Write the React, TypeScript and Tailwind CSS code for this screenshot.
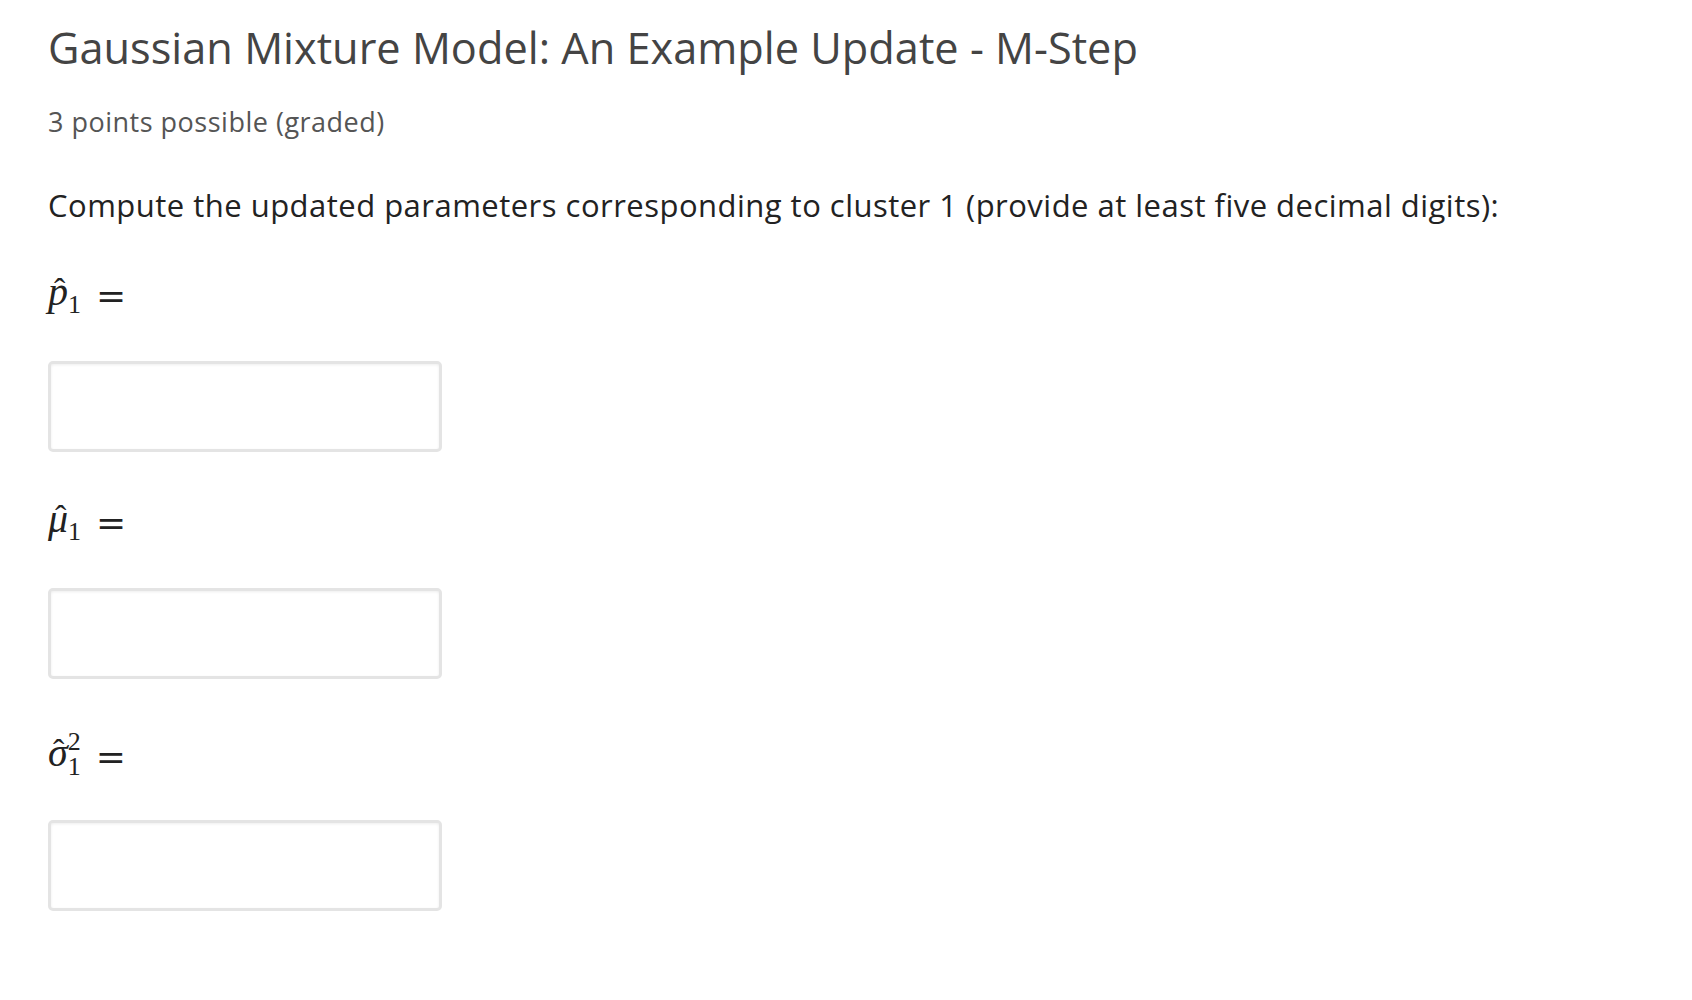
import React from 'react';

const mathFont = { fontFamily: '"Liberation Serif", "Times New Roman", serif' };

function Hat({ children, left = 'left-[6px]' }: { children: React.ReactNode; left?: string }) {
  return (
    <span className="relative inline-block italic text-[40px] leading-[40px]">
      {children}
      <span className={`absolute ${left} top-[2px] not-italic text-[34px] leading-none`}>ˆ</span>
    </span>
  );
}

function Equals() {
  return (
    <span
      className="ml-[15px] text-[36px] leading-[40px] not-italic translate-y-[3px]"
      style={{ fontFamily: '"DejaVu Serif", serif' }}
    >
      =
    </span>
  );
}

function AnswerBox() {
  return (
    <input
      type="text"
      className="block w-[394px] h-[91px] border-[3px] border-[#e4e4e4] rounded-[5px] bg-white px-3 text-[24px] outline-none shadow-[inset_0_1px_3px_rgba(0,0,0,0.07)]"
    />
  );
}

export default function App() {
  return (
    <div className="min-h-screen bg-white px-[48px] pt-[22px]" style={{ fontFamily: '"Open Sans", sans-serif' }}>
      <h1 className="text-[43.3px] leading-[52px] text-[#444444] font-normal">
        Gaussian Mixture Model: An Example Update - M-Step
      </h1>
      <p className="mt-[30px] text-[27px] leading-[36px] tracking-[0.5px] text-[#555555]">3 points possible (graded)</p>
      <p className="mt-[45px] text-[31px] leading-[40px] tracking-[0.48px] text-[#222222]">
        Compute the updated parameters corresponding to cluster 1 (provide at least five decimal digits):
      </p>

      {/* p hat */}
      <div className="mt-[47px] flex items-baseline h-[50px] text-[#222]" style={mathFont}>
        <Hat>p</Hat>
        <span className="text-[26px] leading-none translate-y-[8px]">1</span>
        <Equals />
      </div>
      <div className="mt-[39px]">
        <AnswerBox />
      </div>

      {/* mu hat */}
      <div className="mt-[47px] flex items-baseline h-[50px] text-[#222]" style={mathFont}>
        <Hat left="left-[7px]">μ</Hat>
        <span className="text-[26px] leading-none translate-y-[8px]">1</span>
        <Equals />
      </div>
      <div className="mt-[39px]">
        <AnswerBox />
      </div>

      {/* sigma hat squared */}
      <div className="mt-[54px] flex items-baseline h-[50px] text-[#222]" style={mathFont}>
        <Hat left="left-[5px]">σ</Hat>
        <span className="inline-flex flex-col text-[26px] leading-[25px] -translate-y-[16px]">
          <span>2</span>
          <span>1</span>
        </span>
        <Equals />
      </div>
      <div className="mt-[37px]">
        <AnswerBox />
      </div>
    </div>
  );
}
